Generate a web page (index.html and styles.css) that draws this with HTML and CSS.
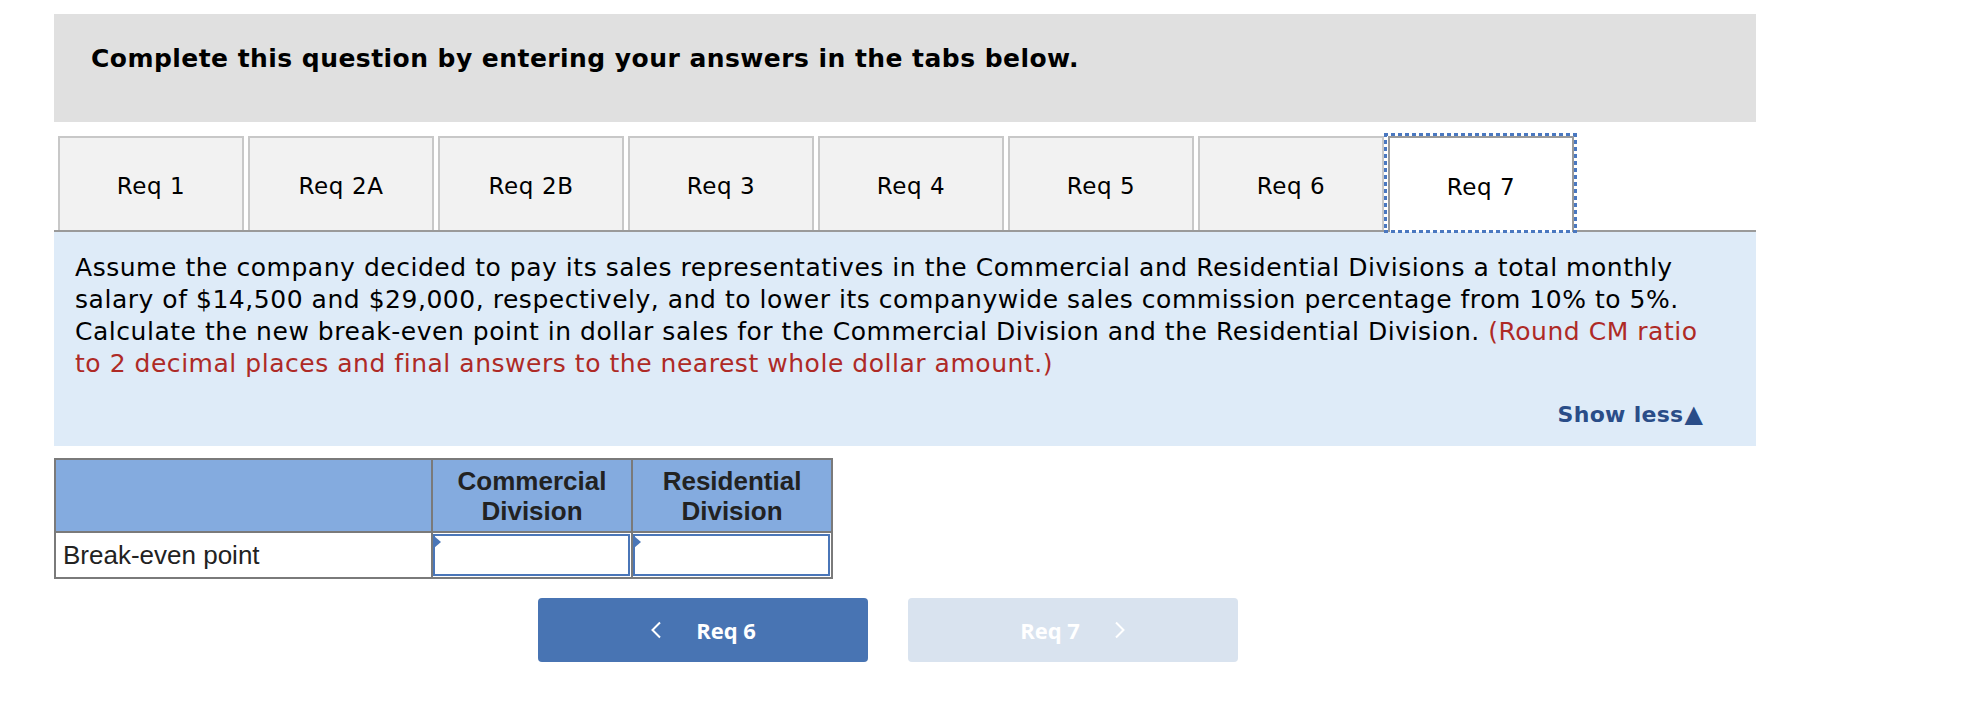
FILE: index.html
```html
<!DOCTYPE html>
<html lang="en">
<head>
<meta charset="utf-8">
<title>Req 7</title>
<link rel="stylesheet" href="styles.css">
</head>
<body>
<div class="page">
  <div class="prompt">
    <h2 class="prompt-title">Complete this question by entering your answers in the tabs below.</h2>
  </div>

  <div class="tabs">
    <div class="tab">Req 1</div>
    <div class="tab">Req 2A</div>
    <div class="tab">Req 2B</div>
    <div class="tab">Req 3</div>
    <div class="tab">Req 4</div>
    <div class="tab">Req 5</div>
    <div class="tab">Req 6</div>
    <div class="tab tab-active">Req 7</div>
  </div>

  <div class="panel">
    <p class="panel-text">Assume the company decided to pay its sales representatives in the Commercial and Residential Divisions a total monthly salary of $14,500 and $29,000, respectively, and to lower its companywide sales commission percentage from 10% to 5%. Calculate the new break-even point in dollar sales for the Commercial Division and the Residential Division. <span class="note">(Round CM ratio to 2 decimal places and final answers to the nearest whole dollar amount.)</span></p>
    <div class="show-less">Show less<span class="tri">&#9650;</span></div>
  </div>

  <table class="grid">
    <colgroup>
      <col class="col-label">
      <col class="col-val">
      <col class="col-val">
    </colgroup>
    <thead>
      <tr>
        <th class="head-blank"></th>
        <th class="head-cell">Commercial<br>Division</th>
        <th class="head-cell">Residential<br>Division</th>
      </tr>
    </thead>
    <tbody>
      <tr>
        <td class="label-cell">Break-even point</td>
        <td class="input-cell"><div class="field"></div></td>
        <td class="input-cell"><div class="field"></div></td>
      </tr>
    </tbody>
  </table>

  <div class="nav">
    <div class="nav-btn nav-prev">
      <svg class="chev" width="12" height="18" viewBox="0 0 12 18"><polyline points="10,1.5 2.5,9 10,16.5" fill="none" stroke="#ffffff" stroke-width="2"/></svg>
      <span>Req 6</span>
    </div>
    <div class="nav-btn nav-next">
      <span>Req 7</span>
      <svg class="chev" width="12" height="18" viewBox="0 0 12 18"><polyline points="2,1.5 9.5,9 2,16.5" fill="none" stroke="#ffffff" stroke-width="2"/></svg>
    </div>
  </div>
</div>
</body>
</html>
```

FILE: styles.css
```css
* { box-sizing: border-box; }

body {
  margin: 0;
  background: #ffffff;
  font-family: "DejaVu Sans", Verdana, sans-serif;
  color: #000;
}

.page {
  margin: 14px 0 0 54px;
  width: 1702px;
}

.prompt {
  background: #e0e0e0;
  height: 108px;
  padding: 30px 0 0 37px;
}

.prompt-title {
  margin: 0;
  font-size: 25px;
  letter-spacing: 0.45px;
  line-height: 30px;
  font-weight: bold;
  color: #000;
}

.tabs {
  display: flex;
  align-items: flex-end;
  margin-top: 14px;
  border-bottom: 2px solid #9a9a9a;
}

.tab {
  width: 186px;
  height: 94px;
  margin-left: 4px;
  border: 2px solid #c8c8c8;
  border-bottom: none;
  background: #f2f2f2;
  display: flex;
  align-items: center;
  justify-content: center;
  padding-top: 4px;
  font-size: 23px;
  letter-spacing: 0.6px;
  color: #000;
}

.tab-active {
  position: relative;
  height: 96px;
  margin-bottom: -2px;
  background: #ffffff;
  border-color: #9a9a9a;
}

.tab-active::after {
  content: "";
  position: absolute;
  top: -5px;
  left: -6px;
  right: -5px;
  bottom: -1px;
  background:
    repeating-linear-gradient(90deg, #4a78c0 0 4px, transparent 4px 7px) left top / 100% 3px no-repeat,
    repeating-linear-gradient(90deg, #4a78c0 0 4px, transparent 4px 7px) left bottom / 100% 3px no-repeat,
    repeating-linear-gradient(180deg, #4a78c0 0 4px, transparent 4px 7px) left top / 3px 100% no-repeat,
    repeating-linear-gradient(180deg, #4a78c0 0 4px, transparent 4px 7px) right top / 3px 100% no-repeat;
}

.panel {
  background: #deebf8;
  padding: 20px 40px 15px 21px;
}

.panel-text {
  margin: 0;
  font-size: 25px;
  letter-spacing: 0.53px;
  line-height: 32px;
  color: #000;
}

.note {
  color: #ae2a26;
}

.show-less {
  margin-top: 18px;
  margin-right: 13px;
  text-align: right;
  font-size: 22px;
  letter-spacing: 0.3px;
  line-height: 32px;
  font-weight: bold;
  color: #2a4d88;
}

.tri {
  font-size: 24px;
  margin-left: 1px;
  letter-spacing: 0;
}

.grid {
  margin-top: 12px;
  border-collapse: collapse;
  table-layout: fixed;
  width: 777px;
  border: 2px solid #7a7a7a;
  font-family: "Liberation Sans", Arial, sans-serif;
  font-size: 26px;
  color: #222;
}

.col-label { width: 377px; }
.col-val { width: 200px; }

.grid th, .grid td {
  border: 2px solid #7a7a7a;
  padding: 0;
}

.grid thead th {
  background: #84abdf;
  height: 73px;
  font-weight: bold;
  line-height: 30px;
  text-align: center;
  vertical-align: middle;
}

.grid tbody td {
  height: 46px;
  background: #ffffff;
  vertical-align: middle;
}

.label-cell {
  padding-left: 7px !important;
  text-align: left;
}

.input-cell {
  padding: 0 1px 0 0 !important;
}

.field {
  position: relative;
  height: 42px;
  border: 2px solid #4a76b8;
  background: #ffffff;
}

.field::before {
  content: "";
  position: absolute;
  left: -1px;
  top: 0;
  width: 0;
  height: 0;
  border-left: 7px solid #4a76b8;
  border-top: 6px solid transparent;
  border-bottom: 6px solid transparent;
}

.nav {
  display: flex;
  gap: 40px;
  margin-top: 19px;
  padding-left: 484px;
}

.nav-btn {
  width: 330px;
  height: 64px;
  border-radius: 4px;
  display: flex;
  align-items: center;
  justify-content: center;
  gap: 34px;
  font-family: "Open Sans", sans-serif;
  font-weight: bold;
  font-size: 22px;
  color: #ffffff;
}

.nav-prev { background: #4874b3; }
.nav-next { background: #d9e3ef; }

.chev { display: block; }
```
